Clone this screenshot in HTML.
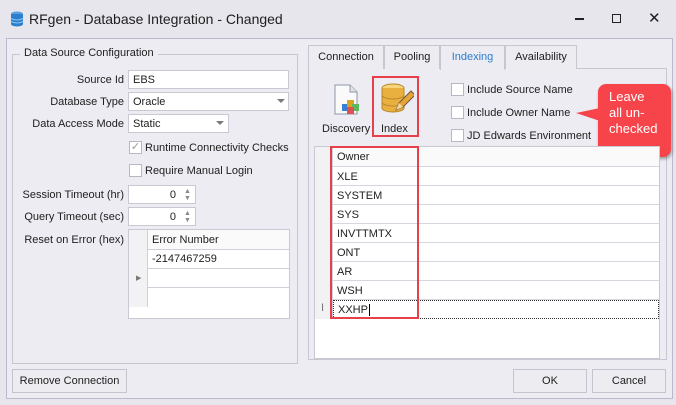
<!DOCTYPE html>
<html><head><style>
*{box-sizing:border-box}
body{margin:0;width:676px;height:405px;background:#e6e6ec;font-family:"Liberation Sans",sans-serif;font-size:11px;color:#1e1e1e;position:relative;overflow:hidden}
.a{position:absolute}
.in{position:absolute;background:#fff;border:1px solid #c9c9d3;padding:3px 0 0 4px;height:19px}
.lbl{position:absolute;text-align:right;width:120px;left:4px}
.cb{position:absolute;width:13px;height:13px;border:1px solid #b8b8c4;background:#fff}
.btn{position:absolute;border:1px solid #c4c4cf;background:#ececf1;text-align:center;padding-top:5px;height:24px}
.tab{position:absolute;top:45px;height:24px;border:1px solid #c7c7d2;border-bottom:none;text-align:center;padding-top:5px;background:#ececf1}
.row{position:absolute;left:333px;width:326px;height:19px;border-bottom:1px solid #d6d6de;background:#fff;padding:4px 0 0 4px}
.dd{position:absolute;width:0;height:0;border-left:4px solid transparent;border-right:4px solid transparent;border-top:4px solid #7a7a7a}
</style></head><body>
<div class="a" style="left:10px;top:11px"><svg width="14" height="16"><ellipse cx="7" cy="3" rx="6" ry="2.5" fill="#5aa0dd"/><rect x="1" y="3" width="12" height="10" fill="#2d7fce"/><ellipse cx="7" cy="13" rx="6" ry="2.5" fill="#2d7fce"/><path d="M1 7.5q6 3 12 0M1 10.5q6 3 12 0" stroke="#8cc4f0" fill="none"/></svg></div>
<div class="a" style="left:29px;top:11px;font-size:14px">RFgen - Database Integration - Changed</div>
<div class="a" style="left:575px;top:18px;width:9px;height:2px;background:#222"></div>
<div class="a" style="left:612px;top:14px;width:9px;height:9px;border:1.5px solid #222"></div>
<div class="a" style="left:648px;top:9px;font-size:15px">✕</div>
<div class="a" style="left:6px;top:38px;width:667px;height:361px;background:#ececf2;border:1px solid #babacc"></div>
<div class="a" style="left:12px;top:54px;width:286px;height:310px;border:1px solid #c6c6d0"></div>
<div class="a" style="left:20px;top:47px;background:#ececf2;padding:0 4px">Data Source Configuration</div>
<div class="lbl" style="top:74px">Source Id</div><div class="in" style="left:128px;top:70px;width:161px">EBS</div>
<div class="lbl" style="top:96px">Database Type</div><div class="in" style="left:128px;top:92px;width:161px">Oracle</div><div class="dd" style="left:277px;top:99px"></div>
<div class="lbl" style="top:118px">Data Access Mode</div><div class="in" style="left:128px;top:114px;width:101px">Static</div><div class="dd" style="left:216px;top:121px"></div>
<div class="cb" style="left:129px;top:141px;font-size:11px;color:#999;line-height:11px;text-align:center">✓</div><div class="a" style="left:145px;top:142px">Runtime Connectivity Checks</div>
<div class="cb" style="left:129px;top:164px"></div><div class="a" style="left:145px;top:165px">Require Manual Login</div>
<div class="lbl" style="top:189px">Session Timeout (hr)</div><div class="in" style="left:128px;top:185px;width:68px;text-align:right;padding-right:19px">0</div>
<div class="lbl" style="top:211px">Query Timeout (sec)</div><div class="in" style="left:128px;top:207px;width:68px;text-align:right;padding-right:19px">0</div>
<div class="a" style="left:184px;top:188px;font-size:7px;color:#888;line-height:7px">▲<br>▼</div>
<div class="a" style="left:184px;top:210px;font-size:7px;color:#888;line-height:7px">▲<br>▼</div>
<div class="lbl" style="top:234px">Reset on Error (hex)</div>
<div class="a" style="left:128px;top:229px;width:162px;height:90px;background:#fff;border:1px solid #c9c9d3"></div>
<div class="a" style="left:129px;top:230px;width:19px;height:77px;background:#f2f2f5;border-right:1px solid #d0d0d8"></div>
<div class="a" style="left:148px;top:230px;width:141px;height:20px;border-bottom:1px solid #d0d0d8;background:#fafafa;padding:4px 4px">Error Number</div>
<div class="a" style="left:148px;top:250px;width:141px;height:19px;border-bottom:1px solid #d0d0d8;padding:3px 4px">-2147467259</div>
<div class="a" style="left:148px;top:269px;width:141px;height:19px;border-bottom:1px solid #d0d0d8"></div>
<div class="a" style="left:136px;top:274px;font-size:7px;color:#777">▶</div>
<div class="btn" style="left:12px;top:369px;width:115px">Remove Connection</div>
<div class="a" style="left:308px;top:68px;width:359px;height:292px;border:1px solid #c7c7d2;background:#ececf2"></div>
<div class="tab" style="left:308px;width:76px">Connection</div>
<div class="tab" style="left:384px;width:56px">Pooling</div>
<div class="tab" style="left:440px;width:65px;color:#2a7dcf;background:#ececf2;height:25px">Indexing</div>
<div class="tab" style="left:505px;width:72px">Availability</div>
<div class="a" style="left:332px;top:84px"><svg width="30" height="32"><path d="M3 1h15l7 7v22H3z" fill="#fafafa" stroke="#8d96a8"/><path d="M18 1v7h7" fill="#e0e4ea" stroke="#8d96a8"/><rect x="10" y="20" width="7" height="7" fill="#3a7fd5"/><rect x="15" y="16" width="7" height="7" fill="#d9a320"/><rect x="20" y="20" width="7" height="7" fill="#5cb85c"/><rect x="15" y="23" width="7" height="7" fill="#e05050"/></svg></div>
<div class="a" style="left:322px;top:123px">Discovery</div>
<div class="a" style="left:380px;top:82px"><svg width="34" height="34"><ellipse cx="13" cy="6" rx="11" ry="4" fill="#f7d57a" stroke="#b7862a"/><path d="M2 6v20a11 4 0 0 0 22 0V6" fill="#e9b040" stroke="#b7862a"/><path d="M2 13a11 4 0 0 0 22 0M2 20a11 4 0 0 0 22 0" stroke="#b7862a" fill="none"/><path d="M16 28l3-7 12-12 4 4-12 12z" fill="#e8a33a" stroke="#6d5a3a"/><path d="M16 28l3-7 4 4z" fill="#f3d6a0"/></svg></div>
<div class="a" style="left:381px;top:123px">Index</div>
<div class="a" style="left:372px;top:76px;width:47px;height:61px;border:2px solid #e8404a"></div>
<div class="cb" style="left:451px;top:83px"></div><div class="a" style="left:467px;top:84px">Include Source Name</div>
<div class="cb" style="left:451px;top:106px"></div><div class="a" style="left:467px;top:107px">Include Owner Name</div>
<div class="cb" style="left:451px;top:129px"></div><div class="a" style="left:467px;top:130px">JD Edwards Environment</div>
<div class="a" style="left:598px;top:84px;width:73px;height:73px;background:#f7444a;border-radius:8px;color:#fff;font-size:13px;line-height:16px;padding:5px 0 0 11px;box-shadow:1px 2px 3px rgba(0,0,0,.35)">Leave<br>all un-<br>checked</div>
<div class="a" style="left:576px;top:108px;width:0;height:0;border-top:5px solid transparent;border-bottom:8px solid transparent;border-right:24px solid #f7444a"></div>
<div class="a" style="left:314px;top:146px;width:346px;height:213px;background:#fff;border:1px solid #c9c9d3"></div>
<div class="a" style="left:315px;top:147px;width:18px;height:172px;background:#f2f2f5;border-right:1px solid #d0d0d8"></div>
<div class="row" style="top:147px;height:20px;background:#fafafa">Owner</div>
<div class="row" style="top:167px">XLE</div>
<div class="row" style="top:186px">SYSTEM</div>
<div class="row" style="top:205px">SYS</div>
<div class="row" style="top:224px">INVTTMTX</div>
<div class="row" style="top:243px">ONT</div>
<div class="row" style="top:262px">AR</div>
<div class="row" style="top:281px">WSH</div>
<div class="row" style="top:300px;border:1px dotted #333;padding-top:3px">XXHP<span style="border-left:1px solid #000;margin-left:1px"></span></div>
<div class="a" style="left:321px;top:302px;color:#777">I</div>
<div class="a" style="left:330px;top:146px;width:89px;height:173px;border:2px solid #e8404a"></div>
<div class="btn" style="left:513px;top:369px;width:74px">OK</div>
<div class="btn" style="left:592px;top:369px;width:74px">Cancel</div>
</body></html>
